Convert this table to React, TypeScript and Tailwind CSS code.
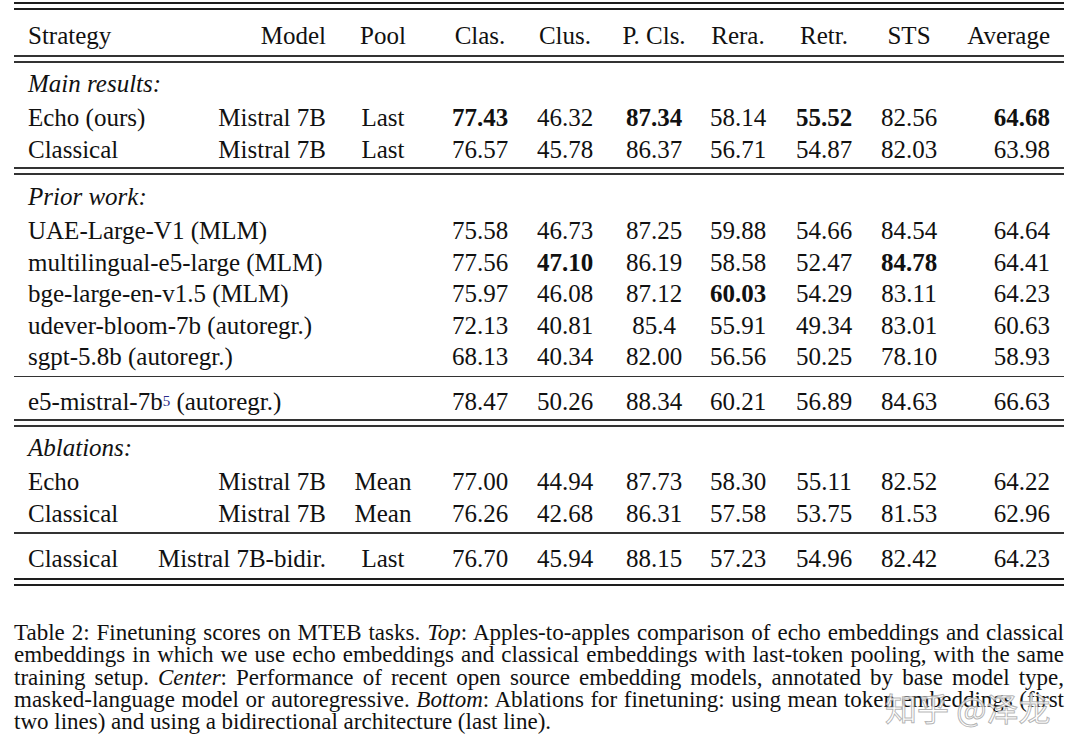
import React from "react";

const GRID =
  "grid grid-cols-[122px_176px_114px_80px_90px_88px_80px_92px_78px_102px] items-center h-[31.5px]";

type RowData = {
  s: React.ReactNode;
  m?: string;
  p?: string;
  n: string[];
  b?: number[];
};

function Nums({ n, b = [] }: { n: string[]; b?: number[] }) {
  return (
    <>
      {n.map((v, i) => (
        <div
          key={i}
          className={
            (i === 6 ? "text-right " : "text-center ") + (b.includes(i) ? "font-bold" : "")
          }
        >
          {v}
        </div>
      ))}
    </>
  );
}

function Row({ r }: { r: RowData }) {
  if (r.m === undefined) {
    return (
      <div className={GRID}>
        <div className="col-span-3 whitespace-nowrap">{r.s}</div>
        <Nums n={r.n} b={r.b} />
      </div>
    );
  }
  return (
    <div className={GRID}>
      <div className="whitespace-nowrap">{r.s}</div>
      <div className="text-right whitespace-nowrap">{r.m}</div>
      <div className="text-center">{r.p}</div>
      <Nums n={r.n} b={r.b} />
    </div>
  );
}

function Title({ t }: { t: string }) {
  return <div className="h-[31.5px] flex items-center italic">{t}</div>;
}

const Thin = () => <div className="h-[1.5px] bg-[#333]" />;
const Double = () => (
  <div className="flex flex-col gap-[4.5px]">
    <div className="h-[1.5px] bg-[#333]" />
    <div className="h-[1.5px] bg-[#333]" />
  </div>
);
const Thick = () => (
  <div className="flex flex-col gap-[4px]">
    <div className="h-[2px] bg-[#1e1e1e]" />
    <div className="h-[2px] bg-[#1e1e1e]" />
  </div>
);

const main: RowData[] = [
  { s: "Echo (ours)", m: "Mistral 7B", p: "Last", n: ["77.43", "46.32", "87.34", "58.14", "55.52", "82.56", "64.68"], b: [0, 2, 4, 6] },
  { s: "Classical", m: "Mistral 7B", p: "Last", n: ["76.57", "45.78", "86.37", "56.71", "54.87", "82.03", "63.98"] },
];

const prior: RowData[] = [
  { s: "UAE-Large-V1 (MLM)", n: ["75.58", "46.73", "87.25", "59.88", "54.66", "84.54", "64.64"] },
  { s: "multilingual-e5-large (MLM)", n: ["77.56", "47.10", "86.19", "58.58", "52.47", "84.78", "64.41"], b: [1, 5] },
  { s: "bge-large-en-v1.5 (MLM)", n: ["75.97", "46.08", "87.12", "60.03", "54.29", "83.11", "64.23"], b: [3] },
  { s: "udever-bloom-7b (autoregr.)", n: ["72.13", "40.81", "85.4", "55.91", "49.34", "83.01", "60.63"] },
  { s: "sgpt-5.8b (autoregr.)", n: ["68.13", "40.34", "82.00", "56.56", "50.25", "78.10", "58.93"] },
];

const e5: RowData = {
  s: (
    <span>
      e5-mistral-7b
      <sup className="text-[15px] text-[#2a2a8a] relative top-[-4px]">5</sup> (autoregr.)
    </span>
  ),
  n: ["78.47", "50.26", "88.34", "60.21", "56.89", "84.63", "66.63"],
};

const abl: RowData[] = [
  { s: "Echo", m: "Mistral 7B", p: "Mean", n: ["77.00", "44.94", "87.73", "58.30", "55.11", "82.52", "64.22"] },
  { s: "Classical", m: "Mistral 7B", p: "Mean", n: ["76.26", "42.68", "86.31", "57.58", "53.75", "81.53", "62.96"] },
];

const bidir: RowData = {
  s: "Classical",
  m: "Mistral 7B-bidir.",
  p: "Last",
  n: ["76.70", "45.94", "88.15", "57.23", "54.96", "82.42", "64.23"],
};

export default function App() {
  return (
    <div
      className="w-[1080px] h-[756px] bg-white text-[#111] overflow-hidden relative"
      style={{ fontFamily: '"Liberation Serif", "Times New Roman", serif' }}
    >
      <div className="pl-[14px] pr-[16px] pt-[2px]">
        <div className="text-[25px]">
          <Thick />
          <div className="pl-[14px] h-[45px] flex items-center">
            <div className={GRID}>
              <div>Strategy</div>
              <div className="text-right">Model</div>
              <div className="text-center">Pool</div>
              <div className="text-center">Clas.</div>
              <div className="text-center">Clus.</div>
              <div className="text-center">P. Cls.</div>
              <div className="text-center">Rera.</div>
              <div className="text-center">Retr.</div>
              <div className="text-center">STS</div>
              <div className="text-right">Average</div>
            </div>
          </div>
          <Double />
          <div className="pl-[14px] pt-[5px] pb-[5px]">
            <Title t="Main results:" />
            {main.map((r, i) => (
              <Row key={i} r={r} />
            ))}
          </div>
          <Double />
          <div className="pl-[14px] pt-[6px] pb-[6px]">
            <Title t="Prior work:" />
            {prior.map((r, i) => (
              <Row key={i} r={r} />
            ))}
          </div>
          <Thin />
          <div className="pl-[14px] pt-[5.5px] pb-[5px]">
            <Row r={e5} />
          </div>
          <Double />
          <div className="pl-[14px] pt-[5px] pb-[6px]">
            <Title t="Ablations:" />
            {abl.map((r, i) => (
              <Row key={i} r={r} />
            ))}
          </div>
          <Thin />
          <div className="pl-[14px] pt-[6px] pb-[7px]">
            <Row r={bidir} />
          </div>
          <Thick />
        </div>

        <div className="mt-[36px] text-[23px] leading-[22.3px] relative">
          <div className="text-justify [text-align-last:justify] whitespace-nowrap">
            Table 2: Finetuning scores on MTEB tasks. <i>Top</i>: Apples-to-apples comparison of echo embeddings and classical
          </div>
          <div className="text-justify [text-align-last:justify] whitespace-nowrap">
            embeddings in which we use echo embeddings and classical embeddings with last-token pooling, with the same
          </div>
          <div className="text-justify [text-align-last:justify] whitespace-nowrap">
            training setup. <i>Center</i>: Performance of recent open source embedding models, annotated by base model type,
          </div>
          <div className="text-justify [text-align-last:justify] whitespace-nowrap">
            masked-language model or autoregressive. <i>Bottom</i>: Ablations for finetuning: using mean token embeddings (first
          </div>
          <div className="whitespace-nowrap">
            two lines) and using a bidirectional architecture (last line).
          </div>
          <div
            className="absolute left-[871px] top-[69px] text-[32px] leading-[32px] whitespace-nowrap text-[rgba(255,255,255,0.8)] [-webkit-text-stroke:1px_rgba(150,150,150,0.7)]"
            style={{ fontFamily: '"Noto Sans CJK SC", "Noto Sans", sans-serif' }}
          >
            知乎 @泽龙
          </div>
        </div>
      </div>
    </div>
  );
}
